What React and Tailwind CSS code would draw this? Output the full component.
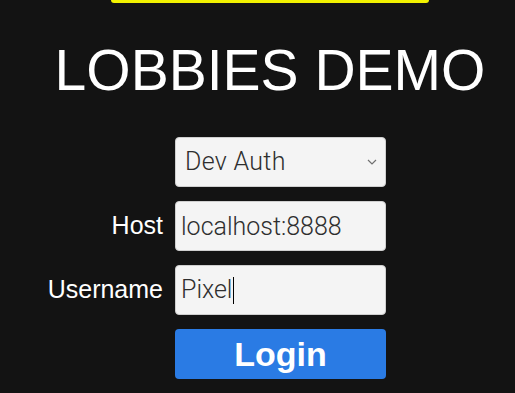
import React, { useState } from 'react'

const inputBox = "h-[50px] w-[211px] rounded-[4px] border border-[#cfcfcf] bg-[#f4f4f4] text-[25px] font-light text-[#2e2e2e] font-['Roboto','Liberation_Sans',sans-serif]"

const App = () => {
    const [auth, setAuth] = useState('dev');
    const [host, setHost] = useState('localhost:8888');

    return (
        <div className="h-screen w-full overflow-hidden bg-[#131313] font-['Liberation_Sans',Arial,sans-serif]">
            <div className="w-[540px] flex flex-col items-center">
                {/* top button, scrolled off */}
                <div className="h-[3px] w-[318px] rounded-b-[3px] bg-[#f2f200]"></div>

                <h1 className="mt-[39px] text-[57px] leading-none text-white">LOBBIES DEMO</h1>

                <form
                    onSubmit={(e) => e.preventDefault()}
                    className="mt-[38px] self-start grid grid-cols-[163px_211px] gap-x-3 gap-y-[14px] items-center"
                >
                    <div></div>
                    <div className="relative">
                        <select
                            value={auth}
                            onChange={(e) => setAuth(e.target.value)}
                            className={`${inputBox} appearance-none pl-[9px] tracking-[0.3px] outline-none`}
                        >
                            <option value="dev">Dev Auth</option>
                        </select>
                        <svg className="absolute right-[9px] top-[22px] pointer-events-none" width="10" height="6" viewBox="0 0 10 6" fill="none">
                            <path d="M1 1l4 4 4-4" stroke="#707070" strokeWidth="1.2" />
                        </svg>
                    </div>

                    <label className="text-right text-[25px] text-white">Host</label>
                    <input
                        value={host}
                        onChange={(e) => setHost(e.target.value)}
                        className={`${inputBox} pl-[5px] outline-none`}
                    />

                    <label className="text-right text-[25px] text-white">Username</label>
                    {/* focused field with caret */}
                    <div className={`${inputBox} flex items-center pl-[5px]`}>
                        <span>Pixel</span>
                        <span className="ml-[1px] h-[27px] w-px bg-black"></span>
                    </div>

                    <div></div>
                    <button
                        type="submit"
                        className="h-[50px] w-[211px] rounded-[4px] bg-[#2a7be4] text-[34px] font-bold text-white"
                    >
                        Login
                    </button>
                </form>
            </div>
        </div>
    )
}

export default App
